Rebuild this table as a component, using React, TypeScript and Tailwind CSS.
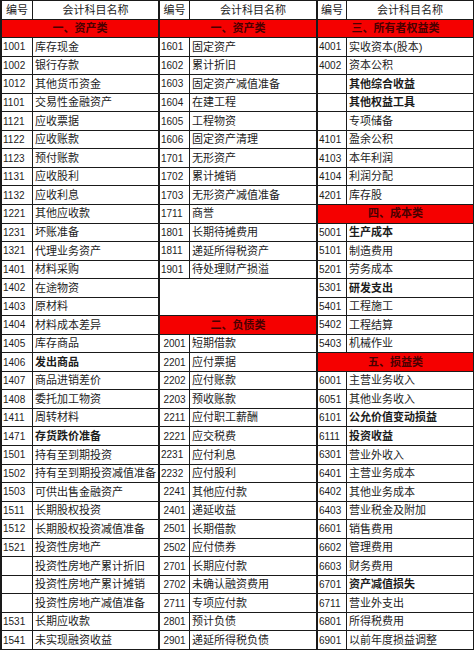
import React from "react";

type Item =
  | { kind: "head" }
  | { kind: "red"; text: string }
  | { kind: "blank" }
  | { kind: "row"; code: string; name: string; bold?: boolean };

const r = (code: string, name: string, bold = false): Item => ({ kind: "row", code, name, bold });

const left: Item[] = [
  { kind: "head" },
  { kind: "red", text: "一、资产类" },
  r("1001", "库存现金"),
  r("1002", "银行存款"),
  r("1012", "其他货币资金"),
  r("1101", "交易性金融资产"),
  r("1121", "应收票据"),
  r("1122", "应收账款"),
  r("1123", "预付账款"),
  r("1131", "应收股利"),
  r("1132", "应收利息"),
  r("1221", "其他应收款"),
  r("1231", "坏账准备"),
  r("1321", "代理业务资产"),
  r("1401", "材料采购"),
  r("1402", "在途物资"),
  r("1403", "原材料"),
  r("1404", "材料成本差异"),
  r("1405", "库存商品"),
  r("1406", "发出商品", true),
  r("1407", "商品进销差价"),
  r("1408", "委托加工物资"),
  r("1411", "周转材料"),
  r("1471", "存货跌价准备", true),
  r("1501", "持有至到期投资"),
  r("1502", "持有至到期投资减值准备"),
  r("1503", "可供出售金融资产"),
  r("1511", "长期股权投资"),
  r("1512", "长期股权投资减值准备"),
  r("1521", "投资性房地产"),
  r("", "投资性房地产累计折旧"),
  r("", "投资性房地产累计摊销"),
  r("", "投资性房地产减值准备"),
  r("1531", "长期应收款"),
  r("1541", "未实现融资收益"),
];

const middle: Item[] = [
  { kind: "head" },
  { kind: "red", text: "一、资产类" },
  r("1601", "固定资产"),
  r("1602", "累计折旧"),
  r("1603", "固定资产减值准备"),
  r("1604", "在建工程"),
  r("1605", "工程物资"),
  r("1606", "固定资产清理"),
  r("1701", "无形资产"),
  r("1702", "累计摊销"),
  r("1703", "无形资产减值准备"),
  r("1711", "商誉"),
  r("1801", "长期待摊费用"),
  r("1811", "递延所得税资产"),
  r("1901", "待处理财产损溢"),
  { kind: "blank" },
  { kind: "red", text: "二、负债类" },
  r("2001", "短期借款"),
  r("2201", "应付票据"),
  r("2202", "应付账款"),
  r("2203", "预收账款"),
  r("2211", "应付职工薪酬"),
  r("2221", "应交税费"),
  r("2231", "应付利息"),
  r("2232", "应付股利"),
  r("2241", "其他应付款"),
  r("2401", "递延收益"),
  r("2501", "长期借款"),
  r("2502", "应付债券"),
  r("2701", "长期应付款"),
  r("2702", "未确认融资费用"),
  r("2711", "专项应付款"),
  r("2801", "预计负债"),
  r("2901", "递延所得税负债"),
];

const right: Item[] = [
  { kind: "head" },
  { kind: "red", text: "三、所有者权益类" },
  r("4001", "实收资本(股本)"),
  r("4002", "资本公积"),
  r("", "其他综合收益", true),
  r("", "其他权益工具", true),
  r("", "专项储备"),
  r("4101", "盈余公积"),
  r("4103", "本年利润"),
  r("4104", "利润分配"),
  r("4201", "库存股"),
  { kind: "red", text: "四、成本类" },
  r("5001", "生产成本", true),
  r("5101", "制造费用"),
  r("5201", "劳务成本"),
  r("5301", "研发支出", true),
  r("5401", "工程施工"),
  r("5402", "工程结算"),
  r("5403", "机械作业"),
  { kind: "red", text: "五、损益类" },
  r("6001", "主营业务收入"),
  r("6051", "其他业务收入"),
  r("6101", "公允价值变动损益", true),
  r("6111", "投资收益", true),
  r("6301", "营业外收入"),
  r("6401", "主营业务成本"),
  r("6402", "其他业务成本"),
  r("6403", "营业税金及附加"),
  r("6601", "销售费用"),
  r("6602", "管理费用"),
  r("6603", "财务费用"),
  r("6701", "资产减值损失", true),
  r("6711", "营业外支出"),
  r("6801", "所得税费用"),
  r("6901", "以前年度损益调整"),
];

// codes in the 2xxx block sit roughly centred, apart from 2231/2232
const leftCodes = new Set(["2231", "2232"]);

function Section({ items, cols, centerCodes }: { items: Item[]; cols: string; centerCodes?: boolean }) {
  return (
    <div className={`grid ${cols} grid-rows-[repeat(35,minmax(0,1fr))] gap-px`}>
      {items.map((it, i) => {
        if (it.kind === "head") {
          return (
            <React.Fragment key={i}>
              <div className="bg-white flex items-center justify-center text-[11px]">编号</div>
              <div className="bg-white flex items-center justify-center text-[11px]">会计科目名称</div>
            </React.Fragment>
          );
        }
        if (it.kind === "red") {
          return (
            <div
              key={i}
              className="col-span-2 bg-[#f50000] flex items-center justify-center text-[11px] font-bold text-[#4a0000]"
            >
              {it.text}
            </div>
          );
        }
        if (it.kind === "blank") {
          return <div key={i} className="col-span-2 row-span-2 bg-white" />;
        }
        const center = centerCodes && it.code.startsWith("2") && !leftCodes.has(it.code);
        return (
          <React.Fragment key={i}>
            <div className={`bg-white flex items-center text-[10px] ${center ? "justify-center" : "pl-px"}`}>
              {it.code}
            </div>
            <div className={`bg-white flex items-center pl-[2px] text-[11px] whitespace-nowrap ${it.bold ? "font-bold" : ""}`}>
              {it.name}
            </div>
          </React.Fragment>
        );
      })}
    </div>
  );
}

export default function App() {
  return (
    <div
      className="w-[474px] h-[650px] bg-[#1a1a1a] flex gap-[2px] pl-[2px] pr-px py-px text-[#1c1c1c] overflow-hidden"
      style={{ fontFamily: '"Liberation Sans", "Noto Sans CJK SC", sans-serif' }}
    >
      <div className="w-[156px] shrink-0">
        <Section items={left} cols="grid-cols-[30px_125px] h-full" />
      </div>
      <div className="w-[156px] shrink-0">
        <Section items={middle} cols="grid-cols-[29px_126px] h-full" centerCodes />
      </div>
      <div className="w-[155px] shrink-0">
        <Section items={right} cols="grid-cols-[28px_126px] h-full" />
      </div>
    </div>
  );
}
